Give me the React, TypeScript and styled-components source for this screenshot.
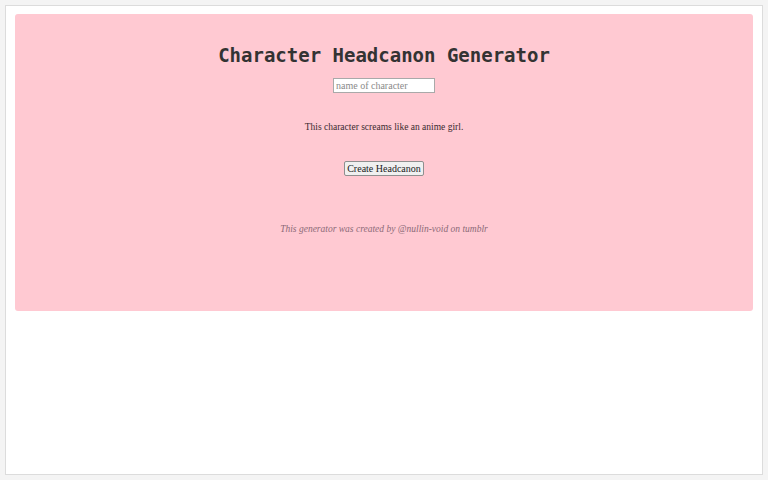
import React, { useState } from 'react'
import styled, { createGlobalStyle } from 'styled-components'

const GlobalStyle = createGlobalStyle`
  html, body {
    margin: 0;
    padding: 0;
    background: #f4f4f4;
  }
  body {
    font-family: 'Liberation Serif', 'Times New Roman', serif;
  }
`

const Frame = styled.div`
  box-sizing: border-box;
  margin: 5px;
  height: 470px;
  background: #ffffff;
  border: 1px solid #dcdcdc;
  padding: 8px 9px;
`

const Panel = styled.div`
  box-sizing: border-box;
  height: 297px;
  background: #ffc9d2;
  border-radius: 3px;
  display: flex;
  flex-direction: column;
  align-items: center;
  padding-top: 30px;
`

const Title = styled.h1`
  margin: 0;
  font-family: 'DejaVu Sans Mono', monospace;
  font-weight: bold;
  font-size: 19px;
  line-height: 22px;
  color: #333333;
`

const NameInput = styled.input`
  box-sizing: border-box;
  margin-top: 12px;
  width: 102px;
  height: 15px;
  padding: 0 2px;
  border: 1px solid #a9a9a9;
  background: #ffffff;
  font-family: 'Liberation Serif', serif;
  font-size: 10px;
  color: #333;
  &::placeholder {
    color: #8a8a8a;
  }
`

const Result = styled.p`
  margin: 28px 0 0;
  font-size: 9.5px;
  line-height: 12px;
  color: #3a2a30;
`

const CreateButton = styled.button`
  box-sizing: border-box;
  margin-top: 28px;
  width: 80px;
  height: 15px;
  padding: 0;
  border: 1px solid #8f8f8f;
  border-radius: 2px;
  background: #f0f0f0;
  font-family: 'Liberation Serif', serif;
  font-size: 10px;
  line-height: 13px;
  color: #222;
`

const Credit = styled.p`
  margin: 47px 0 0;
  font-style: italic;
  font-size: 9.5px;
  line-height: 12px;
  color: #8c6a78;
`

export default function App () {
  const [name, setName] = useState('')

  return (
    <>
      <GlobalStyle />
      <Frame>
        <Panel>
          <Title>Character Headcanon Generator</Title>
          <NameInput
            placeholder='name of character'
            value={name}
            onChange={e => setName(e.target.value)}
          />
          <Result>This character screams like an anime girl.</Result>
          <CreateButton type='button'>Create Headcanon</CreateButton>
          <Credit>This generator was created by @nullin-void on tumblr</Credit>
        </Panel>
      </Frame>
    </>
  )
}
